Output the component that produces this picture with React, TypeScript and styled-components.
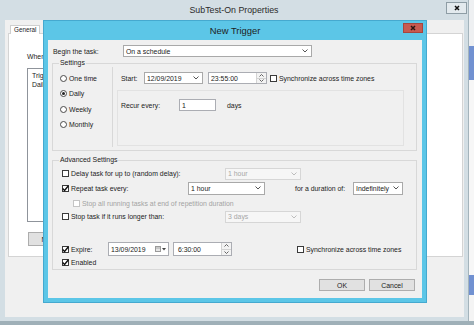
import React from "react";
import styled, { createGlobalStyle } from "styled-components";

const GlobalStyle = createGlobalStyle`
  html, body {
    margin: 0;
    padding: 0;
  }
  body {
    background: #9fb0b8;
    font-family: "Liberation Sans", Arial, sans-serif;
    font-size: 6.9px;
    color: #222;
  }
`;

const Desktop = styled.div`
  position: relative;
  width: 474px;
  height: 325px;
  overflow: hidden;
  display: flex;
  background: #9fb0b8;
`;

/* ---------- the properties window behind ---------- */

const OuterWindow = styled.div`
  width: 469px;
  height: 321px;
  box-sizing: border-box;
  display: flex;
  flex-direction: column;
  background: #d3dee4;
  border-right: 1px solid #a4b4bc;
`;

const OuterTitleBar = styled.div`
  height: 20px;
  display: grid;
  grid-template-columns: 1fr auto 1fr;
  align-items: center;
`;

const OuterTitle = styled.div`
  grid-column: 2;
  font-size: 8.8px;
  color: #2b2b2b;
`;

const OuterClose = styled.div`
  grid-column: 3;
  justify-self: end;
  align-self: start;
  margin: 2px 1px 0 0;
  width: 21px;
  height: 12px;
  box-sizing: border-box;
  border: 1px solid #8e9da5;
  background: #e3eaee;
  display: flex;
  align-items: center;
  justify-content: center;
`;

const OuterClient = styled.div`
  flex: 1;
  margin: 0 4px 4px 5px;
  padding-left: 3px;
  background: #f0f0f0;
  display: flex;
  flex-direction: column;
`;

const TabStrip = styled.div`
  height: 13px;
  display: flex;
  align-items: flex-end;
  padding-left: 2px;
`;

const Tab = styled.div`
  height: 9px;
  box-sizing: border-box;
  padding: 0 3px;
  line-height: 8px;
  font-size: 6.3px;
  background: #fff;
  border: 1px solid #cfcfcf;
  border-bottom: none;
  margin-bottom: -1px;
  position: relative;
`;

const TabPanel = styled.div`
  width: 455px;
  height: 224px;
  box-sizing: border-box;
  background: #fff;
  border: 1px solid #d4d4d4;
  padding: 19px 0 0 18px;
  display: flex;
  flex-direction: column;
  align-items: flex-start;
`;

const WhenLabel = styled.div`
  line-height: 8px;
`;

const TriggerList = styled.div`
  margin-top: 7px;
  width: 120px;
  height: 154px;
  box-sizing: border-box;
  border: 1px solid #8f949b;
  padding: 2px 0 0 4px;
`;

const ListItem = styled.div`
  line-height: 9px;
`;

const NewButton = styled.div`
  margin: 10px 0 0 1px;
  width: 46px;
  height: 14px;
  box-sizing: border-box;
  background: #e1e1e1;
  border: 1px solid #adadad;
  display: flex;
  align-items: center;
  justify-content: center;
`;

const BackApp = styled.div`
  width: 5px;
  height: 321px;
  background: #f4f4f4;
  display: flex;
  flex-direction: column;
`;

const BackBlock = styled.div<{ $h: number; $c: string }>`
  height: ${(p) => p.$h}px;
  background: ${(p) => p.$c};
  flex: none;
`;

/* ---------- New Trigger dialog ---------- */

const Dialog = styled.div`
  position: absolute;
  left: 43px;
  top: 20px;
  width: 384px;
  height: 283px;
  box-sizing: border-box;
  background: #5cc6e7;
  border: 1px solid #45a9cf;
  padding: 0 4px 4px 4px;
  display: flex;
  flex-direction: column;
`;

const DialogTitleBar = styled.div`
  height: 19px;
  display: grid;
  grid-template-columns: 1fr auto 1fr;
  align-items: center;
`;

const DialogTitle = styled.div`
  grid-column: 2;
  font-size: 9.4px;
  color: #1d1d1d;
`;

const DialogClose = styled.div`
  grid-column: 3;
  justify-self: end;
  align-self: start;
  margin: 2px -1px 0 0;
  width: 20px;
  height: 10px;
  box-sizing: border-box;
  background: #c75a50;
  border: 1px solid #a8453d;
  display: flex;
  align-items: center;
  justify-content: center;
`;

const DialogBody = styled.div`
  flex: 1;
  background: #f0f0f0;
  padding: 5px 5px 0 4px;
  display: flex;
  flex-direction: column;
`;

const BeginRow = styled.div`
  height: 12px;
  display: flex;
  align-items: center;
  padding-left: 1px;
`;

const FieldLabel = styled.span<{ $w?: number; $disabled?: boolean }>`
  width: ${(p) => (p.$w ? `${p.$w}px` : "auto")};
  flex: none;
  white-space: nowrap;
  color: ${(p) => (p.$disabled ? "#a3a3a3" : "#222")};
`;

const Combo = styled.div<{ $w: number; $h?: number; $disabled?: boolean }>`
  width: ${(p) => p.$w}px;
  height: ${(p) => p.$h ?? 12}px;
  box-sizing: border-box;
  flex: none;
  display: flex;
  align-items: center;
  justify-content: space-between;
  padding: 0 3px 0 2px;
  background: ${(p) => (p.$disabled ? "#f6f6f6" : "#fff")};
  border: 1px solid ${(p) => (p.$disabled ? "#d6d6d6" : "#a9a9a9")};
  color: ${(p) => (p.$disabled ? "#a6a6a6" : "#222")};
`;

const TextBox = styled.div<{ $w: number; $h?: number }>`
  width: ${(p) => p.$w}px;
  height: ${(p) => p.$h ?? 12}px;
  box-sizing: border-box;
  flex: none;
  display: flex;
  align-items: center;
  justify-content: space-between;
  padding-left: 2px;
  background: #fff;
  border: 1px solid #abadb3;
`;

const Spinner = styled.div`
  width: 9px;
  align-self: stretch;
  display: flex;
  flex-direction: column;
  border-left: 1px solid #d3d3d3;
`;

const SpinHalf = styled.div`
  flex: 1;
  display: flex;
  align-items: center;
  justify-content: center;
  background: #f3f3f3;
  & + & {
    border-top: 1px solid #d3d3d3;
  }
`;

const GroupBox = styled.fieldset<{ $mt: number }>`
  margin: ${(p) => p.$mt}px 0 0 0;
  padding: 0;
  min-width: 0;
  border: 1px solid #d8d8d8;
`;

const GroupLegend = styled.legend`
  margin-left: 6px;
  padding: 0 1px;
  line-height: 8px;
  color: #222;
`;

const SettingsGrid = styled.div`
  height: 83px;
  display: grid;
  grid-template-columns: 60px 1fr;
`;

const RadioColumn = styled.div`
  padding: 4px 0 0 7px;
  margin-bottom: 3px;
  border-right: 1px solid #d8d8d8;
  display: flex;
  flex-direction: column;
`;

const RadioRow = styled.div`
  height: 15.3px;
  display: flex;
  align-items: center;
  gap: 2px;
`;

const Radio = styled.span<{ $on?: boolean }>`
  width: 7px;
  height: 7px;
  box-sizing: border-box;
  border-radius: 50%;
  border: 1px solid #4a4a4a;
  background: #fff;
  flex: none;
  display: flex;
  align-items: center;
  justify-content: center;
  &::after {
    content: "";
    width: 3px;
    height: 3px;
    border-radius: 50%;
    background: ${(p) => (p.$on ? "#222" : "transparent")};
  }
`;

const ScheduleColumn = styled.div`
  padding-left: 8px;
  display: flex;
  flex-direction: column;
`;

const StartRow = styled.div`
  margin-top: 5px;
  height: 12px;
  display: flex;
  align-items: center;
`;

const RecurBox = styled.div`
  margin: 6px 0 0 -4px;
  width: 287px;
  height: 56px;
  box-sizing: border-box;
  border: 1px solid #e2e2e2;
  padding: 8px 0 0 3px;
`;

const RecurRow = styled.div`
  height: 12px;
  display: flex;
  align-items: center;
`;

const AdvancedBody = styled.div`
  height: 105px;
  display: flex;
  flex-direction: column;
`;

const AdvRow = styled.div<{ $h: number; $mt: number; $indent?: number }>`
  height: ${(p) => p.$h}px;
  margin-top: ${(p) => p.$mt}px;
  padding-left: ${(p) => p.$indent ?? 9}px;
  display: flex;
  align-items: center;
`;

const CheckItem = styled.span<{ $w?: number; $disabled?: boolean }>`
  width: ${(p) => (p.$w ? `${p.$w}px` : "auto")};
  flex: none;
  display: flex;
  align-items: center;
  gap: 2px;
  white-space: nowrap;
  color: ${(p) => (p.$disabled ? "#a3a3a3" : "#222")};
`;

const CheckBox = styled.span<{ $disabled?: boolean }>`
  width: 7px;
  height: 7px;
  box-sizing: border-box;
  border: 1px solid ${(p) => (p.$disabled ? "#c4c4c4" : "#3a3a3a")};
  background: #fff;
  flex: none;
  display: flex;
  align-items: center;
  justify-content: center;
  overflow: visible;
`;

const Gap = styled.span<{ $w: number }>`
  width: ${(p) => p.$w}px;
  flex: none;
`;

const CalendarIcon = styled.span`
  display: flex;
  align-items: center;
  gap: 1px;
  margin-right: 2px;
`;

const ButtonRow = styled.div`
  margin: 9px 2px 0 0;
  display: flex;
  justify-content: flex-end;
  gap: 4px;
`;

const DialogButton = styled.div`
  width: 46px;
  height: 12px;
  box-sizing: border-box;
  background: #e1e1e1;
  border: 1px solid #adadad;
  display: flex;
  align-items: center;
  justify-content: center;
`;

const Chevron = ({ color = "#555" }: { color?: string }) => (
  <svg width="6" height="4" viewBox="0 0 6 4">
    <path d="M0.5 0.5 L3 3 L5.5 0.5" fill="none" stroke={color} strokeWidth="1" />
  </svg>
);

const Tick = () => (
  <svg width="7" height="7" viewBox="0 0 7 7" style={{ overflow: "visible" }}>
    <path d="M0.6 3.4 L2.6 5.4 L6.4 0.8" fill="none" stroke="#111" strokeWidth="1.4" />
  </svg>
);

const CloseX = ({ color }: { color: string }) => (
  <svg width="6" height="6" viewBox="0 0 6 6">
    <path d="M1 1 L5 5 M5 1 L1 5" stroke={color} strokeWidth="1.5" />
  </svg>
);

const SpinArrow = ({ up }: { up?: boolean }) => (
  <svg width="5" height="3" viewBox="0 0 5 3">
    <path d={up ? "M0.5 2.5 L2.5 0.5 L4.5 2.5" : "M0.5 0.5 L2.5 2.5 L4.5 0.5"} fill="none" stroke="#555" strokeWidth="0.9" />
  </svg>
);

const TimeSpinner = () => (
  <Spinner>
    <SpinHalf><SpinArrow up /></SpinHalf>
    <SpinHalf><SpinArrow /></SpinHalf>
  </Spinner>
);

const App: React.FC = () => {
  return (
    <>
      <GlobalStyle />
      <Desktop>
        <OuterWindow>
          <OuterTitleBar>
            <OuterTitle>SubTest-On Properties</OuterTitle>
            <OuterClose><CloseX color="#111" /></OuterClose>
          </OuterTitleBar>
          <OuterClient>
            <TabStrip>
              <Tab>General</Tab>
            </TabStrip>
            <TabPanel>
              <WhenLabel>When you create a task</WhenLabel>
              <TriggerList>
                <ListItem>Trigger</ListItem>
                <ListItem>Daily</ListItem>
              </TriggerList>
              <NewButton>New...</NewButton>
            </TabPanel>
          </OuterClient>
        </OuterWindow>
        <BackApp>
          <BackBlock $h={46} $c="#eef0f2" />
          <BackBlock $h={34} $c="#7191d1" />
          <BackBlock $h={195} $c="#f7f7f7" />
          <BackBlock $h={20} $c="#7191d1" />
        </BackApp>

        <Dialog>
          <DialogTitleBar>
            <DialogTitle>New Trigger</DialogTitle>
            <DialogClose><CloseX color="#2a1512" /></DialogClose>
          </DialogTitleBar>
          <DialogBody>
            <BeginRow>
              <FieldLabel $w={70}>Begin the task:</FieldLabel>
              <Combo $w={189}>
                <span>On a schedule</span>
                <Chevron />
              </Combo>
            </BeginRow>

            <GroupBox $mt={2}>
              <GroupLegend>Settings</GroupLegend>
              <SettingsGrid>
                <RadioColumn>
                  <RadioRow><Radio />One time</RadioRow>
                  <RadioRow><Radio $on />Daily</RadioRow>
                  <RadioRow><Radio />Weekly</RadioRow>
                  <RadioRow><Radio />Monthly</RadioRow>
                </RadioColumn>
                <ScheduleColumn>
                  <StartRow>
                    <FieldLabel $w={23}>Start:</FieldLabel>
                    <Combo $w={59}>
                      <span>12/09/2019</span>
                      <Chevron />
                    </Combo>
                    <Gap $w={5} />
                    <TextBox $w={59}>
                      <span>23:55:00</span>
                      <TimeSpinner />
                    </TextBox>
                    <Gap $w={3} />
                    <CheckItem>
                      <CheckBox />
                      Synchronize across time zones
                    </CheckItem>
                  </StartRow>
                  <RecurBox>
                    <RecurRow>
                      <FieldLabel $w={58}>Recur every:</FieldLabel>
                      <TextBox $w={37}>
                        <span>1</span>
                      </TextBox>
                      <Gap $w={11} />
                      <FieldLabel>days</FieldLabel>
                    </RecurRow>
                  </RecurBox>
                </ScheduleColumn>
              </SettingsGrid>
            </GroupBox>

            <GroupBox $mt={5}>
              <GroupLegend>Advanced Settings</GroupLegend>
              <AdvancedBody>
                <AdvRow $h={13} $mt={3}>
                  <CheckItem $w={163}>
                    <CheckBox />
                    Delay task for up to (random delay):
                  </CheckItem>
                  <Combo $w={76} $disabled>
                    <span>1 hour</span>
                    <Chevron color="#bdbdbd" />
                  </Combo>
                </AdvRow>
                <AdvRow $h={14} $mt={1}>
                  <CheckItem $w={126}>
                    <CheckBox><Tick /></CheckBox>
                    Repeat task every:
                  </CheckItem>
                  <Combo $w={77} $h={13}>
                    <span>1 hour</span>
                    <Chevron />
                  </Combo>
                  <Gap $w={30} />
                  <FieldLabel $w={58}>for a duration of:</FieldLabel>
                  <Combo $w={50} $h={13}>
                    <span>Indefinitely</span>
                    <Chevron />
                  </Combo>
                </AdvRow>
                <AdvRow $h={12} $mt={2} $indent={20}>
                  <CheckItem $disabled>
                    <CheckBox $disabled />
                    Stop all running tasks at end of repetition duration
                  </CheckItem>
                </AdvRow>
                <AdvRow $h={13} $mt={1}>
                  <CheckItem $w={163}>
                    <CheckBox />
                    Stop task if it runs longer than:
                  </CheckItem>
                  <Combo $w={76} $disabled>
                    <span>3 days</span>
                    <Chevron color="#bdbdbd" />
                  </Combo>
                </AdvRow>
                <AdvRow $h={14} $mt={19}>
                  <CheckItem $w={46}>
                    <CheckBox><Tick /></CheckBox>
                    Expire:
                  </CheckItem>
                  <TextBox $w={61} $h={14}>
                    <span>13/09/2019</span>
                    <CalendarIcon>
                      <svg width="6" height="6" viewBox="0 0 6 6">
                        <rect x="0.5" y="0.5" width="5" height="5" fill="#e6e6e6" stroke="#9a9a9a" strokeWidth="1" />
                        <path d="M0.5 2 H5.5" stroke="#9a9a9a" strokeWidth="0.8" />
                      </svg>
                      <svg width="4" height="3" viewBox="0 0 4 3">
                        <path d="M0 0 H4 L2 2.5 Z" fill="#444" />
                      </svg>
                    </CalendarIcon>
                  </TextBox>
                  <Gap $w={4} />
                  <TextBox $w={59} $h={14}>
                    <span>&nbsp;6:30:00</span>
                    <TimeSpinner />
                  </TextBox>
                  <Gap $w={65} />
                  <CheckItem>
                    <CheckBox />
                    Synchronize across time zones
                  </CheckItem>
                </AdvRow>
                <AdvRow $h={10} $mt={1}>
                  <CheckItem>
                    <CheckBox><Tick /></CheckBox>
                    Enabled
                  </CheckItem>
                </AdvRow>
              </AdvancedBody>
            </GroupBox>

            <ButtonRow>
              <DialogButton>OK</DialogButton>
              <DialogButton>Cancel</DialogButton>
            </ButtonRow>
          </DialogBody>
        </Dialog>
      </Desktop>
    </>
  );
};

export default App;
